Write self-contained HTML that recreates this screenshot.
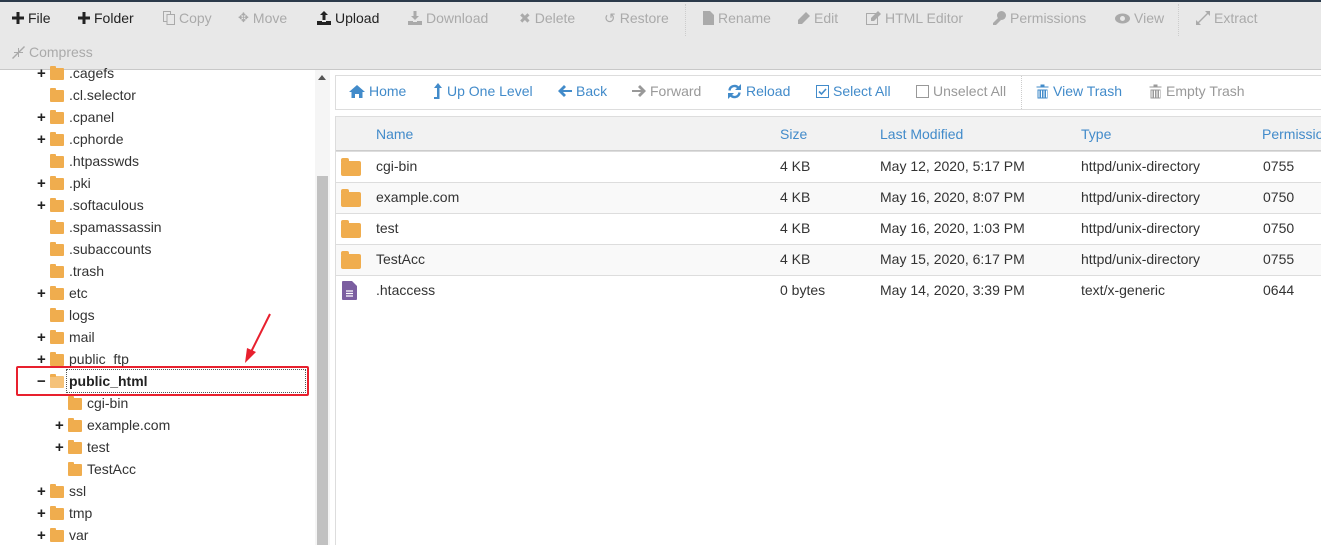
<!DOCTYPE html>
<html><head><meta charset="utf-8"><style>
*{margin:0;padding:0;box-sizing:border-box}
body{width:1321px;height:545px;overflow:hidden;background:#fff;font-family:"Liberation Sans",Arial,sans-serif;position:relative;color:#333}
.a{position:absolute;white-space:nowrap}
.tb{position:absolute;left:0;top:0;width:1321px;height:70px;background:#e8e8e8;border-top:2px solid #2b3a4a;border-bottom:1px solid #c8c8c8}
.ti{position:absolute;font-size:14px;color:#aaa;display:flex;align-items:center;gap:4px;height:20px}
.ti.on{color:#222}
.sep{position:absolute;top:2px;height:32px;border-left:1px dotted #ccc}
.tr{position:absolute;font-size:14px;color:#333;height:20px;display:flex;align-items:center}
.fold{display:inline-block;width:14px;height:12px;background:#f0ad4e;border-radius:1px;position:relative;margin-right:5px;top:1px}
.fold:before{content:"";position:absolute;left:0;top:-2px;width:6px;height:3px;background:#f0ad4e;border-radius:1px 1px 0 0}
.pl{position:absolute;font-size:15px;font-weight:bold;color:#222;line-height:20px}
.nv{position:absolute;font-size:14px;color:#428bca;display:flex;align-items:center;gap:4px;top:83px}
.nv.g{color:#999}
.row{position:absolute;left:336px;width:985px;height:31px;border-top:1px solid #ddd;font-size:14px;color:#333}
.row span{position:absolute;top:6px}
.hd span{color:#428bca}
</style></head><body>
<div class="tb">
 <div class="ti on" style="left:12px;top:6px"><svg width="12" height="12"><path d="M4.5 0h3v4.5H12v3H7.5V12h-3V7.5H0v-3h4.5z" fill="#222"/></svg>File</div>
 <div class="ti on" style="left:78px;top:6px"><svg width="12" height="12"><path d="M4.5 0h3v4.5H12v3H7.5V12h-3V7.5H0v-3h4.5z" fill="#222"/></svg>Folder</div>
 <div class="ti" style="left:163px;top:6px"><svg width="12" height="14"><rect x="0.5" y="0.5" width="7" height="10" fill="none" stroke="#aaa"/><rect x="4" y="3.5" width="7.5" height="10" fill="#e8e8e8" stroke="#aaa"/></svg>Copy</div>
 <div class="ti" style="left:238px;top:6px"><span style="font-size:13px">✥</span>Move</div>
 <div class="ti on" style="left:317px;top:6px"><svg width="14" height="14"><path d="M7 0l4 4H8.5v5h-3V4H3zM0 10h5v1h4v-1h5v4H0z" fill="#222"/></svg>Upload</div>
 <div class="ti" style="left:408px;top:6px"><svg width="14" height="14"><path d="M5.5 0h3v5H11L7 9 3 5h2.5zM0 10h5v1h4v-1h5v4H0z" fill="#aaa"/></svg>Download</div>
 <div class="ti" style="left:519px;top:6px"><span>✖</span>Delete</div>
 <div class="ti" style="left:604px;top:6px"><span>↺</span>Restore</div>
 <div class="sep" style="left:685px"></div>
 <div class="ti" style="left:703px;top:6px"><svg width="11" height="14"><path d="M0 0h7l4 4v10H0z" fill="#aaa"/></svg>Rename</div>
 <div class="ti" style="left:797px;top:6px"><svg width="13" height="13"><path d="M9 0l4 4-8 8H1V8z" fill="#aaa"/></svg>Edit</div>
 <div class="ti" style="left:866px;top:6px"><svg width="15" height="14"><rect x="0.5" y="2.5" width="11" height="11" fill="none" stroke="#aaa"/><path d="M12 0l3 3-7 7H5V7z" fill="#aaa"/></svg>HTML Editor</div>
 <div class="ti" style="left:992px;top:6px"><svg width="14" height="14"><circle cx="9.5" cy="4.5" r="4.5" fill="#aaa"/><path d="M6 7L1 12v2h3l5-5z" fill="#aaa"/></svg>Permissions</div>
 <div class="ti" style="left:1115px;top:6px"><svg width="15" height="11"><ellipse cx="7.5" cy="5.5" rx="7.5" ry="5" fill="#aaa"/><circle cx="7.5" cy="5.5" r="2.5" fill="#e8e8e8"/></svg>View</div>
 <div class="sep" style="left:1178px"></div>
 <div class="ti" style="left:1196px;top:6px"><svg width="14" height="14"><path d="M9 0h5v5L12 3 3 12l2 2H0V9l2 2 9-9z" fill="#aaa"/></svg>Extract</div>
 <div class="ti" style="left:12px;top:40px"><svg width="13" height="13"><path d="M13 1L8 6h3v1H6V2h1v3l5-5zM0 12l5-5H2V6h5v5H6V8l-5 5z" fill="#aaa"/></svg>Compress</div>
</div>

<div id="tree"></div>
<script>
var items=[["+",".cagefs",0],["",".cl.selector",0],["+",".cpanel",0],["+",".cphorde",0],["",".htpasswds",0],["+",".pki",0],["+",".softaculous",0],["",".spamassassin",0],["",".subaccounts",0],["",".trash",0],["+","etc",0],["","logs",0],["+","mail",0],["+","public_ftp",0],["-","public_html",0],["","cgi-bin",1],["+","example.com",1],["+","test",1],["","TestAcc",1],["+","ssl",0],["+","tmp",0],["+","var",0]];
var h="";
for(var i=0;i<items.length;i++){var it=items[i],y=63+i*22,x=it[2]?68:50;
if(it[0]=="+")h+='<div class="pl" style="left:'+(x-13)+'px;top:'+(y+1)+'px">+</div>';
if(it[0]=="-")h+='<div class="pl" style="left:'+(x-13)+'px;top:'+(y+1)+'px">&minus;</div>';
var fw=it[1]=="public_html"?'font-weight:bold;color:#222':'';
h+='<div class="tr" style="left:'+x+'px;top:'+y+'px;'+fw+'"><span class="fold"'+(it[0]=="-"?' style="background:#f5c27a"':'')+'></span>'+it[1]+'</div>';}
document.getElementById("tree").innerHTML=h;
</script>
<div class="a" style="left:66px;top:369px;width:240px;height:24px;border:1px dotted #555"></div>
<div class="a" style="left:16px;top:366px;width:293px;height:30px;border:2px solid #e8202e;border-radius:2px"></div>
<svg class="a" style="left:240px;top:310px" width="40" height="60"><line x1="30" y1="4" x2="10" y2="44" stroke="#e8202e" stroke-width="2"/><path d="M5 53L7 38 16 42z" fill="#e8202e"/></svg>

<div class="a" style="left:315px;top:70px;width:15px;height:475px;background:#f5f5f5"></div>
<div class="a" style="left:317px;top:176px;width:11px;height:369px;background:#c1c1c1"></div>
<div class="a" style="left:318px;top:75px;width:0;height:0;border-left:4px solid transparent;border-right:4px solid transparent;border-bottom:5px solid #555"></div>

<div class="a" style="left:335px;top:75px;width:990px;height:35px;border:1px solid #ddd;border-right:none"></div>
<div class="a" style="left:1021px;top:76px;height:33px;border-left:1px dotted #ccc"></div>
<div class="nv" style="left:349px"><svg width="16" height="13"><path d="M8 0l8 7h-2.5v6H10V9H6v4H2.5V7H0z" fill="#428bca"/></svg>Home</div>
<div class="nv" style="left:433px"><svg width="10" height="16"><path d="M5 0l4 5H6.5v11H1v-2h3V5H1z" fill="#428bca"/></svg>Up One Level</div>
<div class="nv" style="left:558px"><svg width="14" height="12"><path d="M6 0l2 2-3 3h9v2H5l3 3-2 2L0 6z" fill="#428bca"/></svg>Back</div>
<div class="nv g" style="left:632px"><svg width="14" height="12"><path d="M8 0L6 2l3 3H0v2h9l-3 3 2 2 6-6z" fill="#999"/></svg>Forward</div>
<div class="nv" style="left:727px"><svg width="15" height="15" viewBox="0 0 15 15"><path d="M2.5 6.5A5 5 0 0 1 11.5 4M12.5 8.5A5 5 0 0 1 3.5 11" fill="none" stroke="#428bca" stroke-width="2.4"/><path d="M14 0v6H8zM1 15V9h6z" fill="#428bca"/></svg>Reload</div>
<div class="nv" style="left:816px"><svg width="13" height="13"><rect x="0.5" y="0.5" width="12" height="12" fill="none" stroke="#428bca"/><path d="M3 6.5l2.5 2.5L10 4" fill="none" stroke="#428bca" stroke-width="1.6"/></svg>Select All</div>
<div class="nv g" style="left:916px"><svg width="13" height="13"><rect x="0.5" y="0.5" width="12" height="12" fill="none" stroke="#999"/></svg>Unselect All</div>
<div class="nv" style="left:1036px"><svg width="13" height="15"><path d="M4 0h5v2h4v2H0V2h4zM1 5h11v10H1zM3 6.5v7M5.5 6.5v7M8 6.5v7M10.5 6.5v7" fill="#428bca" stroke="#fff" stroke-width="1"/></svg>View Trash</div>
<div class="nv g" style="left:1149px"><svg width="13" height="15"><path d="M4 0h5v2h4v2H0V2h4zM1 5h11v10H1zM3 6.5v7M5.5 6.5v7M8 6.5v7M10.5 6.5v7" fill="#999" stroke="#fff" stroke-width="1"/></svg>Empty Trash</div>

<div class="a" style="left:335px;top:116px;width:1px;height:429px;background:#ddd"></div>
<div class="row hd" style="top:116px;height:35px;background:#f2f2f2;border-top:1px solid #ddd;border-bottom:1px solid #ccc"><span style="left:40px;top:9px">Name</span><span style="left:444px;top:9px">Size</span><span style="left:544px;top:9px">Last Modified</span><span style="left:745px;top:9px">Type</span><span style="left:926px;top:9px">Permissions</span></div>
<div id="rows"></div>
<script>
var r=[["cgi-bin","4 KB","May 12, 2020, 5:17 PM","httpd/unix-directory","0755"],["example.com","4 KB","May 16, 2020, 8:07 PM","httpd/unix-directory","0750"],["test","4 KB","May 16, 2020, 1:03 PM","httpd/unix-directory","0750"],["TestAcc","4 KB","May 15, 2020, 6:17 PM","httpd/unix-directory","0755"],[".htaccess","0 bytes","May 14, 2020, 3:39 PM","text/x-generic","0644"]];
var s="";
for(var i=0;i<r.length;i++){var q=r[i],y=151+i*31;
var ic=i<4?'<span style="left:5px;top:9px;width:20px;height:15px;background:#f0ad4e;border-radius:2px"></span><span style="left:5px;top:6px;width:8px;height:4px;background:#f0ad4e;border-radius:2px 2px 0 0"></span>'
:'<svg style="position:absolute;left:6px;top:5px" width="15" height="19"><path d="M0 1a1 1 0 0 1 1-1h9l5 5v13a1 1 0 0 1-1 1H1a1 1 0 0 1-1-1z" fill="#7b5ea0"/><path d="M4 10h7M4 12.5h7M4 15h7" stroke="#fff" stroke-width="1.2"/></svg>';
s+='<div class="row" style="top:'+y+'px;background:'+(i%2?'#f9f9f9':'#fff')+'">'+ic+'<span style="left:40px">'+q[0]+'</span><span style="left:444px">'+q[1]+'</span><span style="left:544px">'+q[2]+'</span><span style="left:745px">'+q[3]+'</span><span style="left:927px">'+q[4]+'</span></div>';}
document.getElementById("rows").innerHTML=s;
</script>
</body></html>
